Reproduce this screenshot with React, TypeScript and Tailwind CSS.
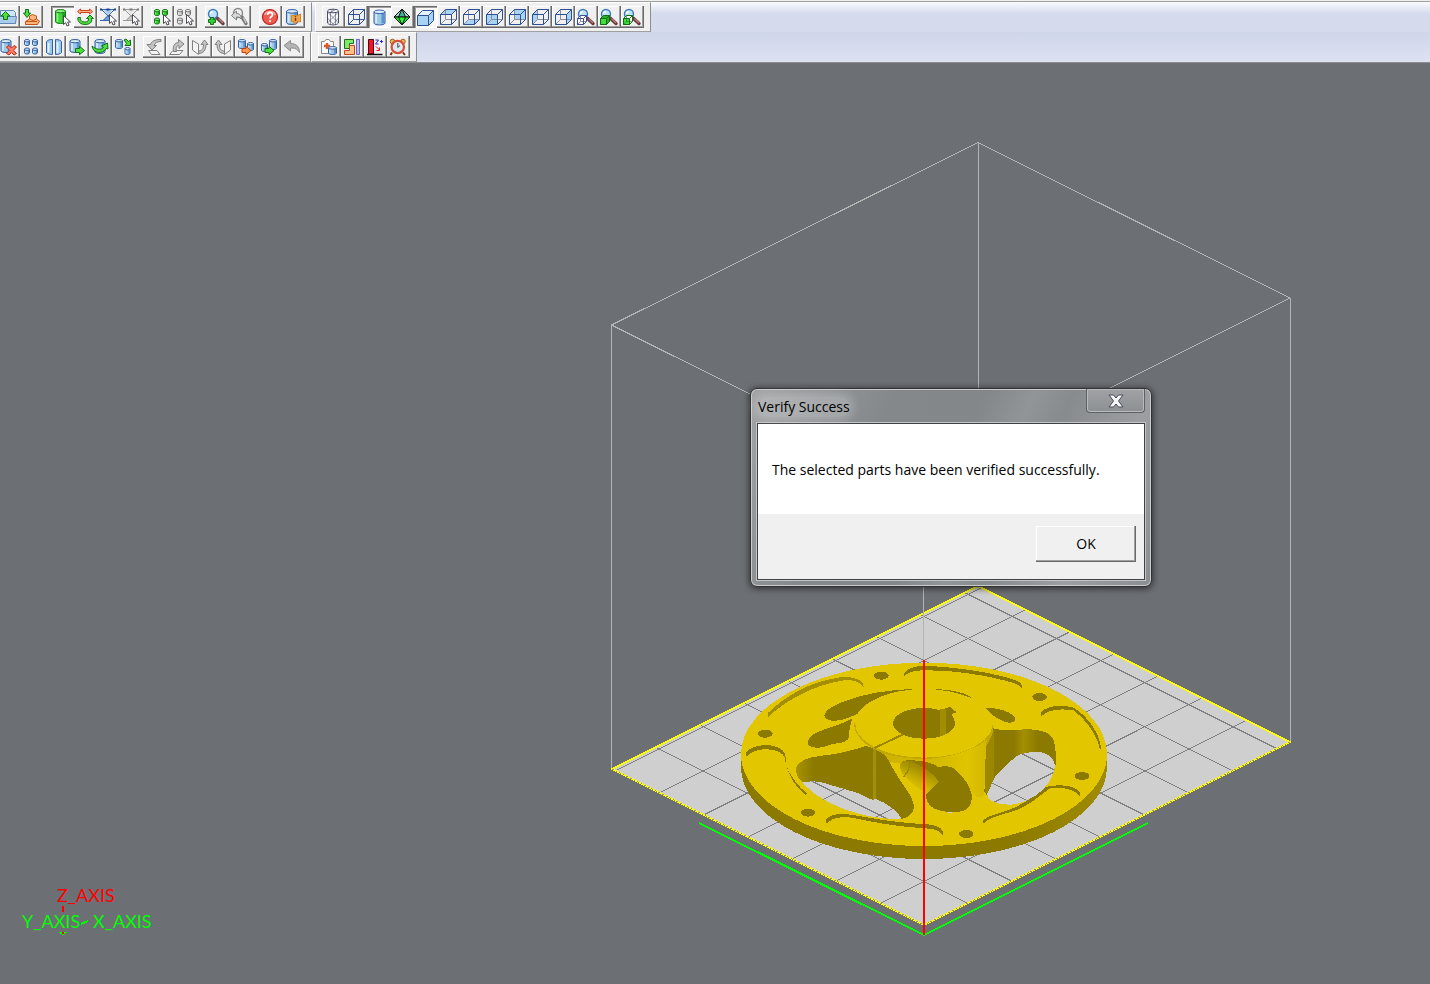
import React from "react";

type Tone = "blue" | "green" | "gray";
const tones: Record<Tone, { light: string; mid: string; dark: string; line: string }> = {
  blue: { light: "#d4ecfb", mid: "#9cc8ea", dark: "#5b93cc", line: "#3a5fa0" },
  green: { light: "#8df27c", mid: "#3fd63a", dark: "#1fa321", line: "#157a1a" },
  gray: { light: "#f4f4f4", mid: "#dcdcdc", dark: "#b5b5b5", line: "#737373" },
};

function Cyl({ x, y, w, h, t = "blue" }: { x: number; y: number; w: number; h: number; t?: Tone }) {
  const c = tones[t];
  const r = w / 2;
  const e = Math.max(1.2, w / 6);
  return (
    <g stroke={c.line} strokeWidth="1">
      <path d={`M${x} ${y + e}V${y + h - e}A${r} ${e} 0 0 0 ${x + w} ${y + h - e}V${y + e}Z`} fill={c.mid} />
      <path d={`M${x + w * 0.68} ${y + e * 1.6}V${y + h - e * 0.8}L${x + w - 0.5} ${y + h - e}V${y + e}Z`} fill={c.dark} stroke="none" />
      <path d={`M${x + w * 0.2} ${y + e * 1.8}V${y + h - e}`} stroke={c.light} strokeWidth={w / 6} />
      <ellipse cx={x + r} cy={y + e} rx={r} ry={e} fill={c.light} />
    </g>
  );
}

function Pointer({ x = 12, y = 9 }: { x?: number; y?: number }) {
  return (
    <path
      transform={`translate(${x} ${y})`}
      d="M.5 .5V9.5L2.7 7.6L4 11L6 10.2L4.7 7H7.5Z"
      fill="#fff"
      stroke="#4a4a52"
      strokeWidth="1"
    />
  );
}

type Face = "solid" | "none" | "top" | "bottom" | "front" | "back" | "left" | "right";
const facePath: Record<Face, string> = {
  solid: "M3.5 8.5L8.5 3.5H19.5V13.5L14.5 18.5H3.5Z",
  none: "",
  top: "M3.5 8.5L8.5 3.5H19.5L14.5 8.5Z",
  bottom: "M3.5 18.5L8.5 13.5H19.5L14.5 18.5Z",
  front: "M3.5 8.5H14.5V18.5H3.5Z",
  back: "M8.5 3.5H19.5V13.5H8.5Z",
  left: "M3.5 8.5L8.5 3.5V13.5L3.5 18.5Z",
  right: "M14.5 8.5L19.5 3.5V13.5L14.5 18.5Z",
};
function Cube({ face }: { face: Face }) {
  return (
    <g strokeWidth="1" fill="none">
      <path d={facePath[face]} fill="#a9d3f3" />
      {face === "solid" ? (
        <path d="M3.5 8.5L8.5 3.5H19.5L14.5 8.5Z" fill="#e3f3fd" />
      ) : (
        <path d="M8.5 3.5V13.5H19.5M8.5 13.5L3.5 18.5" stroke={face === "none" ? "#3f5b9a" : "#8a8fa0"} />
      )}
      <path d="M3.5 8.5L8.5 3.5H19.5V13.5L14.5 18.5H3.5ZM3.5 8.5H14.5V18.5M14.5 8.5L19.5 3.5" stroke="#2f4f94" />
    </g>
  );
}

function Lens({ gray = false, x = 8, y = 8, r = 4.5 }: { gray?: boolean; x?: number; y?: number; r?: number }) {
  return (
    <g>
      <path d={`M${x + r - 0.5} ${y + r - 0.5}L18 17.5`} stroke={gray ? "#777" : "#6a3838"} strokeWidth="3.4" strokeLinecap="round" />
      <path d={`M${x + r + 1} ${y + r}L18 17`} stroke={gray ? "#c8c8c8" : "#b07c7c"} strokeWidth="1.5" />
      <circle cx={x} cy={y} r={r} fill={gray ? "#eee" : "#bfe3fa"} stroke={gray ? "#888" : "#3d7ab8"} strokeWidth="1.4" />
      <path d={`M${x - 2.5} ${y}A2.5 2.5 0 0 1 ${x} ${y - 2.5}`} stroke="#fff" strokeWidth="1.4" fill="none" />
    </g>
  );
}

function SmallCube({ fill, side }: { fill: string; side: string }) {
  const line = fill === "#fff" ? "#3a4f94" : "#126b16";
  return (
    <g stroke={line} strokeWidth="1">
      <path d="M2.5 12.5L5.5 9.5H11.5V15.5L8.5 18.5H2.5Z" fill={side} />
      <path d="M2.5 12.5H8.5V18.5H2.5Z" fill={fill} />
      <path d="M8.5 12.5L11.5 9.5" />
      {side === "#fff" && <path d="M5.5 9.5V15.5H11.5M5.5 15.5L2.5 18.5" fill="none" strokeWidth=".6" />}
    </g>
  );
}

function RightArrow({ x, y, orange = false }: { x: number; y: number; orange?: boolean }) {
  return (
    <path
      transform={`translate(${x} ${y})`}
      d="M0 2.5H4V.3L9 4.5L4 8.7V6.5H0Z"
      fill={orange ? "#ff9a4a" : "#4be03c"}
      stroke={orange ? "#c23c12" : "#146f18"}
      strokeWidth="1"
    />
  );
}

function Funnel({ gray = false }: { gray?: boolean }) {
  const c = gray ? "#9a9a9a" : "#3564b0";
  return (
    <g>
      <path d="M7 4L11 9.5L15 4Z" fill={gray ? "#e8e8e8" : "#a8cbf0"} />
      <path d="M3 3.5H19M5 4L15 14M17 4L7 14" stroke={c} strokeWidth="1" fill="none" />
      <path d="M6 14.500L11 9.500L14 14.500Z" fill={gray ? "#c8c8c8" : "#6fa4e2"} stroke={c} />
      <path d="M3 14.5H12" stroke={c} />
      <path d="M3 3.5h2M9.500 3.500h3M17 3.500h2" stroke={gray ? "#777" : "#1c3f86"} strokeWidth="2" />
      <Pointer x={12} y={8} />
    </g>
  );
}

const four = (t: Tone) => (
  <g>
    <Cyl x={3.5} y={3.5} w={5} h={6} t={t} />
    <Cyl x={3.5} y={12} w={5} h={6} t={t} />
    <Cyl x={11.5} y={3.5} w={5} h={6} t={t} />
  </g>
);

const g = "#808080";
const icons: Record<string, React.ReactNode> = {
  "Open folder": (
    <g strokeWidth="1">
      <path d="M3.5 17.5V4.5H16.5L18.5 6.5V17.5Z" fill="#cfe6f7" stroke="#5f86b4" />
      <path d="M2 10.5H19.5L18.5 17.5H2Z" fill="#a8cdec" stroke="#5f86b4" />
      <path d="M6.500 13.5V10H4L8.500 5.500L13 10H10.500V13.500Z" fill="#4be03c" stroke="#146f18" />
    </g>
  ),
  "Import part": (
    <g strokeWidth="1">
      <path d="M5.5 15.5L9.5 13V10L12.5 8.5L16.5 10V13L19.5 15L17.5 18.5H5.5Z" fill="#ffb67c" stroke="#c4511a" />
      <path d="M9.5 13L13 14.5L16.5 13M6 15.5H17" fill="none" stroke="#c4511a" />
      <path d="M5.5 3.5H8.5V7H10.5L7 11.5L3.5 7H5.5Z" fill="#4be03c" stroke="#146f18" />
    </g>
  ),
  "Select part": (
    <g>
      <Cyl x={4.5} y={3.5} w={10} h={14} t="green" />
      <Pointer x={12} y={9} />
    </g>
  ),
  "Rotate view": (
    <g strokeWidth="1">
      <path d="M3.5 5.5L6.5 3V4.5H15.5V3L18.5 5.5L15.5 8V6.5H6.5V8Z" fill="#ffb08a" stroke="#d0431c" />
      <path d="M4 11.5C3 16 7 18.5 11 18.5C16 18.5 18.5 16 17.5 12.5H19.5L16 9L12.5 12.5H14.5C15 15 13 16 11 16C8 16 6 15 6.5 11.5Z" fill="#4be03c" stroke="#146f18" />
    </g>
  ),
  "Select triangles": <Funnel />,
  "Select marked": <Funnel gray />,
  "Select all parts": <g>{four("green")}<Pointer x={12} y={8} /></g>,
  "Deselect parts": <g>{four("gray")}<Pointer x={12} y={8} /></g>,
  "Zoom in": (
    <g>
      <Lens />
      <path d="M5.500 11.500H8.500V13.500H10.500V16.500H8.500V18.500H5.500V16.500H3.500V13.500H5.500Z" fill="#2fd22f" stroke="#0d6412" strokeWidth=".9" />
    </g>
  ),
  "Zoom previous": (
    <g>
      <Lens gray x={10} y={7} />
      <path d="M3.5 9.5L8.5 5V7.500C12 7.500 13.500 10 13 13C11.500 11 10.500 11 8.500 11V14Z" fill="#dadada" stroke={g} />
    </g>
  ),
  Help: (
    <g>
      <circle cx="11" cy="11" r="7.5" fill="#ee5a4e" stroke="#b8221c" strokeWidth="1.2" />
      <path d="M5.5 9A6 6 0 0 1 16.5 9" stroke="#ffaaa0" fill="none" strokeWidth="1.5" />
      <path d="M8.5 9C8.5 5.8 13.5 5.8 13.5 8.7C13.5 10.5 11 10.5 11 12.8M11 14.2V16" stroke="#fff" fill="none" strokeWidth="1.8" />
    </g>
  ),
  "Part info": (
    <g>
      <Cyl x={4.5} y={3.5} w={11} h={15} />
      <path d="M9.500 9.500H15.500L18.500 8V16L15.500 15.500L12 18V15.500H9.500Z" fill="#f5a243" stroke="#d98428" />
      <path d="M13.500 10V11.200M13.500 12V15" stroke="#6d3c10" strokeWidth="1.4" />
    </g>
  ),
  "Wireframe cylinder": (
    <g stroke="#4a5165" strokeWidth="1" fill="#f6f8fb">
      <path d="M5.5 5V17C7 19.5 15 19.5 16.5 17V5" />
      <ellipse cx="11" cy="5" rx="5.5" ry="1.8" />
      <path d="M8.5 6.5V18.5M13.5 6.5V18.5M5.5 6L16.5 17M5.5 12L11 18M16.5 6L5.5 17M16.5 12L11 18M11 3L8.5 6.5L13.5 3.5" fill="none" strokeWidth=".6" />
    </g>
  ),
  "Wireframe box": <Cube face="none" />,
  "Shaded cylinder": <Cyl x={6} y={4} w={11} h={15} />,
  Facets: (
    <g stroke="#111" strokeWidth="1">
      <path d="M3 11L11 3L19 11Z" fill="#a6dcd6" />
      <path d="M3 11H19L11 19Z" fill="#17e626" />
      <path d="M11 3L7.500 11H14.500Z" fill="#3fb492" />
      <path d="M7.500 11H14.500L11 19Z" fill="#2aff36" />
    </g>
  ),
  "Isometric view": <g transform="translate(0 1)"><Cube face="solid" /></g>,
  "Top view": <Cube face="top" />,
  "Bottom view": <Cube face="bottom" />,
  "Front view": <Cube face="front" />,
  "Back view": <Cube face="back" />,
  "Left view": <Cube face="left" />,
  "Right view": <Cube face="right" />,
  "Zoom platform": <g><Lens /><SmallCube fill="#fff" side="#fff" /></g>,
  "Zoom all parts": <g><Lens /><SmallCube fill="#3fe03a" side="#23b023" /></g>,
  "Zoom selected": <g><Lens /><SmallCube fill="#3fe03a" side="#fff" /></g>,
  "Delete part": (
    <g>
      <Cyl x={4} y={3.5} w={10} h={13} />
      <path d="M9.5 11L12 9.5L14.5 12L17 9.5L19.5 11L16.5 14.3L19.5 17.5L17 19L14.5 16.5L12 19L9.5 17.5L12.5 14.3Z" fill="#ff7a63" stroke="#c22b17" />
    </g>
  ),
  "Arrange parts": (
    <g transform="translate(1 0)">
      {four("blue")}
      <Cyl x={11.5} y={12} w={5} h={6} />
    </g>
  ),
  "Split part": (
    <g stroke="#3a5fa0" strokeWidth="1">
      <path d="M9.5 3.5C6 3.5 3.5 4.5 3.5 6V16.5C4.5 18 7 18.5 9.5 18.5Z" fill="#9cc8ea" />
      <path d="M12.5 3.5C16 3.5 18.5 4.5 18.5 6V16.5C17.5 18 15 18.5 12.5 18.5Z" fill="#9cc8ea" />
      <path d="M5.5 7V16.5M14.5 6V17" stroke="#e0f2fd" strokeWidth="2" />
    </g>
  ),
  "Move part": <g><Cyl x={4} y={3.5} w={10} h={13} /><RightArrow x={9.5} y={10} /></g>,
  "Rotate part": (
    <g>
      <Cyl x={6} y={3.5} w={10} h={14} />
      <path d="M3 10C4 18 14 18.500 17 12.500L19 13L18.500 7L12.500 10L14.500 11.500C12 14.500 7 13.500 3 10Z" fill="#4be03c" stroke="#146f18" />
    </g>
  ),
  "Scale part": (
    <g>
      <Cyl x={3.5} y={3.5} w={7} h={9} />
      <Cyl x={13} y={11.5} w={5} h={7} />
      <path d="M12 4L14 3L16.5 5.5L18.5 4V9.5H13L14.5 7.5Z" fill="#4be03c" stroke="#146f18" />
    </g>
  ),
  "Place face down": (
    <g fill="#c4c4c4" stroke={g}>
      <path d="M5.5 14.5H14L17 18.5H8.500Z" fill="#f4f4f4" />
      <path d="M18 3.5C12 3.5 8.5 5 7.5 8.5H4L9 14L13.5 9.5H11C12 7 14 5.5 18 5.5Z" />
    </g>
  ),
  "Place face up": (
    <g fill="#c4c4c4" stroke={g}>
      <path d="M3.5 18.5L7 14.5H17L13.5 18.5Z" fill="#f4f4f4" />
      <path d="M7.5 15.5C6.5 10 8.5 7 12.5 6.5V3.5L18 8L13 12.5V9.5C10.5 9.5 9.5 12 10.5 15.5Z" />
    </g>
  ),
  "Turn left": (
    <g fill="#c4c4c4" stroke={g}>
      <path d="M3.500 4.500L9.500 8V18.500L3.500 14Z" fill="#f4f4f4" />
      <path d="M9.5 15C13 15 14.5 13 14.5 8.5H12L15.5 4L19 8.5H17C17 14.5 14 17.5 9.5 17.5Z" />
    </g>
  ),
  "Turn right": (
    <g fill="#c4c4c4" stroke={g}>
      <path d="M12.5 8L18.500 4.500V14L12.500 18.500Z" fill="#f4f4f4" />
      <path d="M12.5 15C9 15 7.5 13 7.5 8.5H10L6.5 4L3 8.5H5C5 14.5 8 17.5 12.5 17.5Z" />
    </g>
  ),
  "Copy part": (
    <g>
      <Cyl x={3.5} y={3.5} w={7} h={9} />
      <Cyl x={12.5} y={6.5} w={6} h={8} />
      <RightArrow x={7} y={10} orange />
    </g>
  ),
  "Move copies": (
    <g>
      <Cyl x={3.5} y={7.5} w={6} h={8} />
      <Cyl x={11.5} y={3.5} w={7} h={10} />
      <RightArrow x={7} y={10} />
    </g>
  ),
  Undo: <path d="M3 9.5L9.5 4.5V7.5C15.5 7.5 18.5 11 18.5 16.5C16 12.5 13.5 12 9.5 12V15Z" fill="#b4b4b4" stroke="#8c8c8c" />,
  "Repair part": (
    <g>
      <path d="M3.5 5.5H6.5L8 3.5H11L12.5 5.5H15.5V17.5H3.5Z" fill="#fbfbfb" stroke="#8a8a8a" />
      <path d="M9 7V13M6 10H12" stroke="#e2582c" strokeWidth="2.4" />
      <Cyl x={10.5} y={10.5} w={8} h={8} />
    </g>
  ),
  "Nest parts": (
    <g strokeWidth="1">
      <path d="M3.5 3.5H12.5V7.5H8.5V12.5H3.5Z" fill="#7fe86c" stroke="#17701a" />
      <path d="M3.5 14.5H8.500V9.500H13.500V18.500H3.500Z" fill="#ffc08a" stroke="#c2481a" />
      <path d="M15.5 3.5H18.5V18.5H15.5Z" fill="#b9b6f4" stroke="#6863bd" />
    </g>
  ),
  "Z compensation": (
    <g>
      <path d="M4.5 3.5H9.5V18H4.5Z" fill="#f0142c" stroke="#50050c" />
      <path d="M3 18.5H18.5" stroke="#111" strokeWidth="1.5" />
      <path d="M11.5 4H14.5L11.5 8H14.5M16 5.5H19M17.5 4V7" stroke="#2828e8" fill="none" />
      <path d="M12 10.5L15.5 14M15.5 11.5V14.5H12.5" stroke="#f01818" fill="none" />
    </g>
  ),
  "Build time": (
    <g>
      <path d="M5 16.5L3.5 19M16 16.5L18 19" stroke="#7d2d18" strokeWidth="2" />
      <circle cx="5.5" cy="5.5" r="2.3" fill="#f0b950" stroke="#a26315" />
      <circle cx="16" cy="5.5" r="2.3" fill="#f0b950" stroke="#a26315" />
      <circle cx="10.8" cy="11" r="6.2" fill="#dceaf2" stroke="#d4513a" strokeWidth="2.2" />
      <path d="M10.8 7V11.5L13 9.5" stroke="#444" fill="none" />
    </g>
  ),
};

function ToolButton({ name, pressed = false }: { name: string; pressed?: boolean }) {
  return (
    <button
      type="button"
      aria-label={name}
      aria-pressed={pressed}
      className={
        pressed
          ? "h-[22px] w-[23px] shrink-0 bg-[#f8f8f8] shadow-[inset_1px_1px_0_#696969,inset_2px_2px_0_#a0a0a0,inset_-1px_-1px_0_#ffffff]"
          : "h-[22px] w-[23px] shrink-0 bg-[#f0f0f0] shadow-[inset_-1px_-1px_0_#696969,inset_-2px_-2px_0_#a0a0a0,inset_1px_1px_0_#ffffff]"
      }
    >
      <svg viewBox="0 0 23 22" className="block size-full" aria-hidden="true">
        {icons[name]}
      </svg>
    </button>
  );
}

const pressedTools = ["Select part", "Shaded cylinder", "Isometric view"];

function ToolGroup({ names }: { names: string[] }) {
  return (
    <div className="flex">
      {names.map((n) => (
        <ToolButton key={n} name={n} pressed={pressedTools.includes(n)} />
      ))}
    </div>
  );
}

const toolbarPlace = {
  first: "-ml-[3px]",
  joined: "border-l border-l-white pl-1.5",
  spaced: "ml-[3px] border-l border-l-white pl-1.5",
};

function Toolbar({ groups, place }: { groups: string[][]; place: keyof typeof toolbarPlace }) {
  return (
    <div
      role="toolbar"
      className={`flex h-full shrink-0 items-center gap-2 border-r border-r-[#8e8e8e] border-t border-t-white border-b border-b-[#a0a0a0] bg-[#f0f0f0] pr-1.5 ${toolbarPlace[place]}`}
    >
      {groups.map((names) => (
        <ToolGroup key={names[0]} names={names} />
      ))}
    </div>
  );
}

const bar1: string[][] = [
  ["Open folder", "Import part"],
  ["Select part", "Rotate view", "Select triangles", "Select marked"],
  ["Select all parts", "Deselect parts"],
  ["Zoom in", "Zoom previous"],
  ["Help", "Part info"],
];
const bar2: string[][] = [
  [
    "Wireframe cylinder", "Wireframe box", "Shaded cylinder", "Facets", "Isometric view", "Top view", "Bottom view",
    "Front view", "Back view", "Left view", "Right view", "Zoom platform", "Zoom all parts", "Zoom selected",
  ],
];
const bar3: string[][] = [
  ["Delete part", "Arrange parts", "Split part", "Move part", "Rotate part", "Scale part"],
  ["Place face down", "Place face up", "Turn left", "Turn right", "Copy part", "Move copies", "Undo"],
];
const bar4: string[][] = [["Repair part", "Nest parts", "Z compensation", "Build time"]];

function GridLines() {
  const lines: React.ReactNode[] = [];
  for (let k = 0; k <= 7; k++) {
    const x = 924 - 44.1 * k;
    const y = 862.5 - 22.1 * k;
    lines.push(<line key={`a${k}`} x1={x} y1={y} x2={x + 366} y2={y - 183} />);
  }
  for (let j = 0; j <= 8; j++) {
    const x = 924 + 44.1 * j;
    const y = 862.5 - 22.1 * j;
    lines.push(<line key={`b${j}`} x1={x} y1={y} x2={x - 312} y2={y - 156} />);
  }
  return <g stroke="#808080" strokeWidth="1">{lines}</g>;
}

const HOLE_LEFT = "M216 428C245 422 262 423 285 430L380 458C400 465 415 478 430 480L437 477C470 488 500 512 515 535C490 538 450 536 400 525C330 508 260 477 216 428Z";
const HOLE_RIGHT = "M855 352C870 339 905 334 935 337C960 342 972 358 975 378C973 410 950 442 920 465C890 485 860 495 835 494C795 493 771 480 771 462C777 448 785 435 792 415C805 395 835 370 855 352Z";

function Part() {
  const top = "#e2c600";
  const side = "#8c7a00";
  return (
    <g>
      <g transform="translate(730 577) scale(.33333)">
        <path d="M33 343V382A549 275 0 0 0 1131 382V343Z" fill="url(#rim)" />
        <ellipse cx="582" cy="343" rx="549" ry="275" fill={top} />

        <g fill={side}>
          <path d="M115 218C170 165 240 125 330 112C370 107 402 120 402 143C392 124 365 117 335 122C250 136 170 180 115 230Z" fill="#a38f00" />
          <path d="M522 100C532 84 556 78 582 78C680 80 800 100 860 122C875 128 876 134 875 143C865 130 840 125 770 109C690 94 630 91 582 91C550 91 535 96 522 110Z" />
          <path d="M48 338C68 308 150 306 166 342L168 375C178 405 205 440 230 460L228 465C195 440 168 400 165 352C150 322 75 318 50 350Z" />
          <path d="M287 540C300 522 330 519 370 525C440 538 530 551 582 552C612 553 636 562 638 575V585C630 570 606 565 582 565C500 560 420 545 370 534C330 527 305 535 287 552Z" />
          <path d="M760 540C775 525 820 520 860 500C900 480 920 460 945 442C975 431 1040 434 1050 458V468C1035 444 980 440 958 446C920 475 890 500 855 512C810 525 780 532 760 550Z" />
          <path d="M933 218C950 195 1000 193 1030 203C1070 225 1110 280 1113 325L1110 332C1105 290 1070 240 1030 211C990 205 955 208 933 230Z" />
          {[[454, 107], [106, 281], [234, 518], [929, 171], [1056, 408], [709, 582]].map(([x, y]) => (
            <ellipse key={x} cx={x} cy={y} rx="22" ry="12" />
          ))}
          <path d="M545 147C480 150 400 160 340 185C300 200 283 215 283 228C287 245 320 245 345 237L382 222C390 207 410 190 430 181C470 163 510 154 545 150Z" />
          <path d="M366 236C330 255 300 262 265 275C238 288 228 303 235 315C245 325 270 326 290 318C310 308 340 312 352 300C362 290 355 275 360 262Z" />
          <path d="M765 203C800 203 840 212 855 232C860 245 850 250 830 247C805 240 785 225 765 203Z" />
          <path d="M618 148C660 148 712 158 725 175C710 168 670 155 618 150Z" />
          <path d="M788 265C830 275 860 270 890 267C930 270 955 275 965 290C978 310 978 340 977 375L855 352L771 466L763 455C767 400 767 350 770 300Z" fill="url(#bay)" />
          <path d="M408 318C360 333 330 341 270 348C230 352 205 365 197 385C197 405 212 428 225 430L285 430L430 480L515 537C535 535 552 517 552 500C550 480 540 465 530 450C510 420 490 390 478 365L465 345L433 325Z" fill="url(#bayLeft)" />
        </g>
        <path d="M430 325H438V480H430Z" fill="#a38f00" />

        <path d={HOLE_LEFT} fill="#cfcfcf" />
        <path d={HOLE_RIGHT} fill="#cfcfcf" />
        <path d="M792 268V415L771 462L764 455L768 300Z" fill="#9b8800" />

        <path d="M371 250C374 285 400 312 433 327L465 345L582 380L720 352L770 318L790 275V250Z" fill="#c0a800" />
        <path d="M463 341C500 352 545 357 582 357C660 355 730 330 770 300C764 350 768 400 762 462C745 490 722 460 710 420L640 385L582 375L500 370L478 365Z" fill="url(#neck)" />

        <path d="M508 378C512 362 530 359 548 361C590 362 616 373 627 383C645 374 665 378 678 390C700 410 722 440 725 465C727 490 720 510 690 515C660 518 620 515 605 500C590 490 586 470 590 462L575 440L520 405Z" fill={side} />
        <path d="M508 378C514 362 535 361 545 363C575 375 612 402 627 425L590 462L580 455C548 432 512 408 508 378Z" fill="url(#boss)" />
        <path d="M539 362C541 378 538 393 520 411" stroke="#9b8700" strokeWidth="4" fill="none" />
        <path d="M654 517H667" stroke="#cfcfcf" strokeWidth="4" />

        <ellipse cx="582" cy="250" rx="206" ry="103" fill={top} />
        <ellipse cx="582" cy="250" rx="93" ry="46" fill={side} />
        <path d="M640 208L660 200L680 217L665 222L674 240L650 220Z" fill={side} />
        <path d="M630 208H648V282L630 290Z" fill="#a18d00" />
        <path d="M520 283L433 324" stroke="#9b8800" strokeWidth="6" />
      </g>
      <g clipPath="url(#openings)">
        <GridLines />
      </g>
    </g>
  );
}

function Scene() {
  return (
    <svg viewBox="0 0 1430 921" className="block w-full" role="img" aria-label="Build platform with part">
      <defs>
        <clipPath id="openings">
          <path transform="translate(730 577) scale(.33333)" d={HOLE_LEFT} />
          <path transform="translate(730 577) scale(.33333)" d={HOLE_RIGHT} />
        </clipPath>
        <linearGradient id="rim">
          <stop offset="0" stopColor="#8c7a00" />
          <stop offset=".75" stopColor="#8c7a00" />
          <stop offset="1" stopColor="#a08c00" />
        </linearGradient>
        <linearGradient id="bay">
          <stop offset="0" stopColor="#8c7a00" />
          <stop offset=".42" stopColor="#8c7a00" />
          <stop offset=".55" stopColor="#a38f00" />
          <stop offset=".75" stopColor="#8c7a00" />
          <stop offset="1" stopColor="#8c7a00" />
        </linearGradient>
        <linearGradient id="bayLeft">
          <stop offset="0" stopColor="#a89400" />
          <stop offset=".15" stopColor="#8c7a00" />
          <stop offset="1" stopColor="#8c7a00" />
        </linearGradient>
        <linearGradient id="neck">
          <stop offset="0" stopColor="#cdb300" />
          <stop offset=".5" stopColor="#d4ba00" />
          <stop offset=".8" stopColor="#e0c400" />
          <stop offset="1" stopColor="#d2b800" />
        </linearGradient>
        <linearGradient id="boss" x1=".75" y1=".1" x2=".3" y2=".9">
          <stop offset="0" stopColor="#8c7a00" />
          <stop offset=".3" stopColor="#a89300" />
          <stop offset=".7" stopColor="#d0b600" />
          <stop offset="1" stopColor="#dfc400" />
        </linearGradient>
      </defs>
      <g shapeRendering="crispEdges">
        <path d="M611.5 706V262L978 79.500L1290 235V679M978 80V523M611.5 262L924 418L1290 235" fill="none" stroke="#b4b4b4" strokeWidth="1" />
        <path d="M978 523L1290 679L924 862L612 706Z" fill="#cfcfcf" />
        <GridLines />
        <path d="M978 523L1290 679L924 862L612 706Z" fill="none" stroke="#ffff00" strokeWidth="2" />
        <path d="M612 706L924 862L1290 679" fill="none" stroke="#9a9a50" strokeWidth="1" strokeDasharray="2 2" />
        <path d="M923.5 418V600" stroke="#b4b4b4" strokeWidth="1" />
        <Part />
        <path d="M699 760L924 872L1148 760" fill="none" stroke="#00ff00" strokeWidth="2" />
        <path d="M924 597V872" stroke="#ff0000" strokeWidth="2" />
        <path d="M63 843V849" stroke="#ff0000" strokeWidth="2" />
        <path d="M81 861L88 858" stroke="#00ff00" strokeWidth="2" />
        <path d="M58 869H68L63 872Z" fill="#00ff00" />
        <path d="M62 869H64V871H62Z" fill="#ff0000" />
      </g>
      <g className="font-['Lato',sans-serif] text-[18px]">
        <text x="57" y="839" fill="#ff0000">Z_AXIS</text>
        <text x="22" y="865" fill="#00ff00">Y_AXIS</text>
        <text x="93" y="865" fill="#00ff00">X_AXIS</text>
      </g>
    </svg>
  );
}

function VerifyDialog() {
  return (
    <section
      role="dialog"
      aria-labelledby="dialog-title"
      className="absolute left-[750px] top-[325px] w-[402px] rounded-[7px] border border-[#303234] bg-[linear-gradient(115deg,#a2a4a6_0%,#8f9295_18%,#85888b_30%,#84878a_48%,#929597_58%,#888b8e_66%,#9c9ea1_82%,#8b8e91_100%)] px-1.5 pb-1.5 font-['Open_Sans','Noto_Sans',sans-serif] text-sm text-black shadow-[inset_0_0_0_1px_#c9cbcd,0_1px_6px_1px_rgba(0,0,0,0.55)]"
    >
      <header className="flex h-[34px] items-start justify-between">
        <h1 id="dialog-title" className="mt-2 ml-px rounded-full bg-white/20 leading-5 shadow-[0_0_8px_4px_rgba(255,255,255,0.2)]">
          Verify Success
        </h1>
        <button
          type="button"
          aria-label="Close"
          className="flex h-6 w-[59px] items-center justify-center rounded-b-[4px] border border-t-0 border-[#5d6064] bg-linear-to-b from-[#a0a2a5] to-[#8d9093] shadow-[inset_0_0_0_1px_#b9bbbd]"
        >
          <svg viewBox="0 0 16 14" className="h-3.5 w-4" aria-hidden="true">
            <path d="M1 1H5.5L8 4L10.5 1H15L10.5 7L15 13H10.5L8 10L5.5 13H1L5.5 7Z" fill="#f4f4f4" stroke="#484c5c" />
          </svg>
        </button>
      </header>
      <div className="border border-[#3f4143] bg-[#f0f0f0] shadow-[0_0_0_1px_#c3c5c7]">
        <p className="bg-white px-3.5 pt-9 pb-[34px] leading-5">The selected parts have been verified successfully.</p>
        <div className="flex justify-end px-2 pt-3 pb-[17px]">
          <button
            type="button"
            className="h-9 w-[100px] bg-[#f0f0f0] shadow-[inset_-1px_-1px_0_#696969,inset_-2px_-2px_0_#a0a0a0,inset_1px_1px_0_#ffffff]"
          >
            OK
          </button>
        </div>
      </div>
    </section>
  );
}

export default function App() {
  return (
    <div className="flex min-h-screen flex-col overflow-x-hidden bg-[#6c6f74]">
      <header className="border-b border-[#8c8e92] bg-[#d5daed]">
        <div className="border-b border-[#a0a0a0] bg-[#f0f0f0] pt-px" />
        <div className="flex h-[30px] bg-linear-to-b from-[#fafbfe] to-[#d5daed] to-40%">
          <Toolbar place="first" groups={bar1} />
          <Toolbar place="spaced" groups={bar2} />
        </div>
        <div className="flex h-[30px] bg-linear-to-b from-[#cfd5ea] to-[#dde2f2]">
          <Toolbar place="first" groups={bar3} />
          <Toolbar place="joined" groups={bar4} />
        </div>
      </header>
      <main className="relative flex-1">
        <Scene />
        <VerifyDialog />
      </main>
    </div>
  );
}
